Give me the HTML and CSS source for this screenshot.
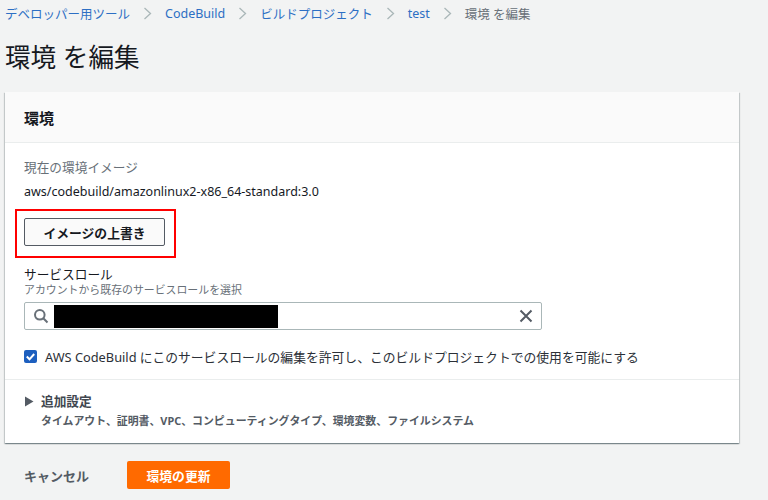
FILE: index.html
```html
<!DOCTYPE html>
<html lang="ja">
<head>
<meta charset="utf-8">
<title>環境 を編集</title>
<link rel="stylesheet" href="styles.css">
</head>
<body>
<nav class="crumbs">
  <a>デベロッパー用ツール</a>
  <svg class="sep" width="9" height="13" viewBox="0 0 9 13"><path d="M1.500 1l6 5.500-6 5.500" fill="none" stroke="#aab7b8" stroke-width="1.300"/></svg>
  <a>CodeBuild</a>
  <svg class="sep" width="9" height="13" viewBox="0 0 9 13"><path d="M1.500 1l6 5.500-6 5.500" fill="none" stroke="#aab7b8" stroke-width="1.300"/></svg>
  <a>ビルドプロジェクト</a>
  <svg class="sep" width="9" height="13" viewBox="0 0 9 13"><path d="M1.500 1l6 5.500-6 5.500" fill="none" stroke="#aab7b8" stroke-width="1.300"/></svg>
  <a>test</a>
  <svg class="sep" width="9" height="13" viewBox="0 0 9 13"><path d="M1.500 1l6 5.500-6 5.500" fill="none" stroke="#aab7b8" stroke-width="1.300"/></svg>
  <span class="current">環境 を編集</span>
</nav>
<h1 class="title">環境 を編集</h1>
<section class="card">
  <h2 class="card-head">環境</h2>
  <div class="card-body">
    <div class="muted-label">現在の環境イメージ</div>
    <div class="image-name">aws/codebuild/amazonlinux2-x86_64-standard:3.0</div>
    <div class="highlight"><button class="btn">イメージの上書き</button></div>
    <div class="role-label">サービスロール</div>
    <div class="role-hint">アカウントから既存のサービスロールを選択</div>
    <div class="search">
      <svg class="search-icon" width="16" height="16" viewBox="0 0 16 16"><circle cx="6.800" cy="6.800" r="4.800" fill="none" stroke="#687078" stroke-width="2"/><path d="M10.300 10.300l4.200 4.200" stroke="#687078" stroke-width="2"/></svg>
      <div class="redact"></div>
      <svg class="clear-icon" width="14" height="14" viewBox="0 0 14 14"><path d="M1.500 1.500l11 11M12.500 1.500l-11 11" stroke="#545b64" stroke-width="2"/></svg>
    </div>
    <label class="check">
      <svg width="13" height="13" viewBox="0 0 13 13"><rect width="13" height="13" rx="2" fill="#1d5fbf"/><path d="M2.800 6.500l2.700 2.800 4.700-5.300" fill="none" stroke="#fff" stroke-width="2"/></svg>
      <span>AWS CodeBuild にこのサービスロールの編集を許可し、このビルドプロジェクトでの使用を可能にする</span>
    </label>
  </div>
  <div class="extra">
    <div class="extra-title"><svg width="10" height="11" viewBox="0 0 10 11"><path d="M1 .5l8.500 5-8.500 5z" fill="#545b64"/></svg><span>追加設定</span></div>
    <div class="extra-desc">タイムアウト、証明書、VPC、コンピューティングタイプ、環境変数、ファイルシステム</div>
  </div>
</section>
<div class="actions">
  <a class="cancel">キャンセル</a>
  <button class="primary">環境の更新</button>
</div>
</body>
</html>
```
FILE: styles.css
```css
* { box-sizing: border-box; }
html, body { margin: 0; height: 500px; overflow: hidden; }
body {
  background: #f2f3f3;
  color: #16191f;
  font-family: "Noto Sans", "Noto Sans CJK JP", sans-serif;
  font-size: 12.700px;
  padding-left: 5px;
}
.crumbs {
  display: flex;
  align-items: center;
  height: 26px;
  font-size: 12.500px;
}
.crumbs a { color: #2d6fc4; }
.sep { margin: 0 13px 0 13px; flex: none; }
.crumbs .current { color: #687078; }
.title {
  margin: 16px 0 0;
  font-size: 25.600px;
  line-height: 32px;
  font-weight: 400;
  color: #16191f;
}
.card {
  width: 734px;
  margin-top: 18px;
  background: #fff;
  box-shadow: 0 1px 1px 0 rgba(0, 28, 36, .3), 1px 1px 1px 0 rgba(0, 28, 36, .15), -1px 1px 1px 0 rgba(0, 28, 36, .15);
}
.card-head {
  margin: 0;
  padding: 0 19px;
  height: 51px;
  display: flex;
  align-items: center;
  background: #fafafa;
  border-bottom: 1px solid #eaeded;
  font-size: 15px;
  font-weight: 700;
}
.card-body { padding: 15px 19px 0; }
.muted-label { color: #687078; line-height: 18px; }
.image-name { margin-top: 7px; line-height: 18px; font-size: 12.500px; }
.highlight {
  width: 161px;
  height: 49px;
  margin: 8px 0 0 -9px;
  padding: 7px 0 0 7px;
  border: 2px solid #ff0000;
}
.btn {
  display: block;
  width: 141px;
  height: 28px;
  padding: 0;
  background: #fafafa;
  border: 1px solid #545b64;
  border-radius: 2px;
  color: #16191f;
  font: 700 12.800px "Noto Sans", "Noto Sans CJK JP", sans-serif;
}
.role-label { margin-top: 8px; line-height: 17px; }
.role-hint { font-size: 10.900px; line-height: 14px; color: #687078; }
.search {
  display: flex;
  align-items: center;
  width: 518px;
  height: 28px;
  margin-top: 5px;
  padding: 0 8px;
  background: #fff;
  border: 1px solid #aab7b8;
  border-radius: 2px;
}
.search-icon { flex: none; }
.redact { width: 224px; height: 23px; margin-left: 5px; background: #000; }
.clear-icon { margin-left: auto; flex: none; }
.check {
  display: flex;
  align-items: center;
  gap: 8px;
  margin-top: 17px;
  height: 18px;
  font-size: 12.800px;
  color: #2b3037;
}
.check svg { flex: none; }
.extra {
  margin-top: 14px;
  padding: 12px 19px 15px;
  border-top: 1px solid #eaeded;
}
.extra-title { display: flex; align-items: center; gap: 7px; font-weight: 700; color: #414750; line-height: 18px; }
.extra-desc { margin-top: 4px; margin-left: 17px; font-size: 10.900px; line-height: 14px; font-weight: 700; color: #545b64; }
.actions { display: flex; align-items: center; margin-top: 18px; padding-left: 19px; }
.cancel { width: 103px; font-size: 13px; font-weight: 700; color: #545b64; }
.primary {
  width: 103px;
  height: 28px;
  padding: 0;
  background: #ff6a00;
  border: 0;
  border-radius: 2px;
  color: #fff;
  font: 700 12.800px "Noto Sans", "Noto Sans CJK JP", sans-serif;
}
```
